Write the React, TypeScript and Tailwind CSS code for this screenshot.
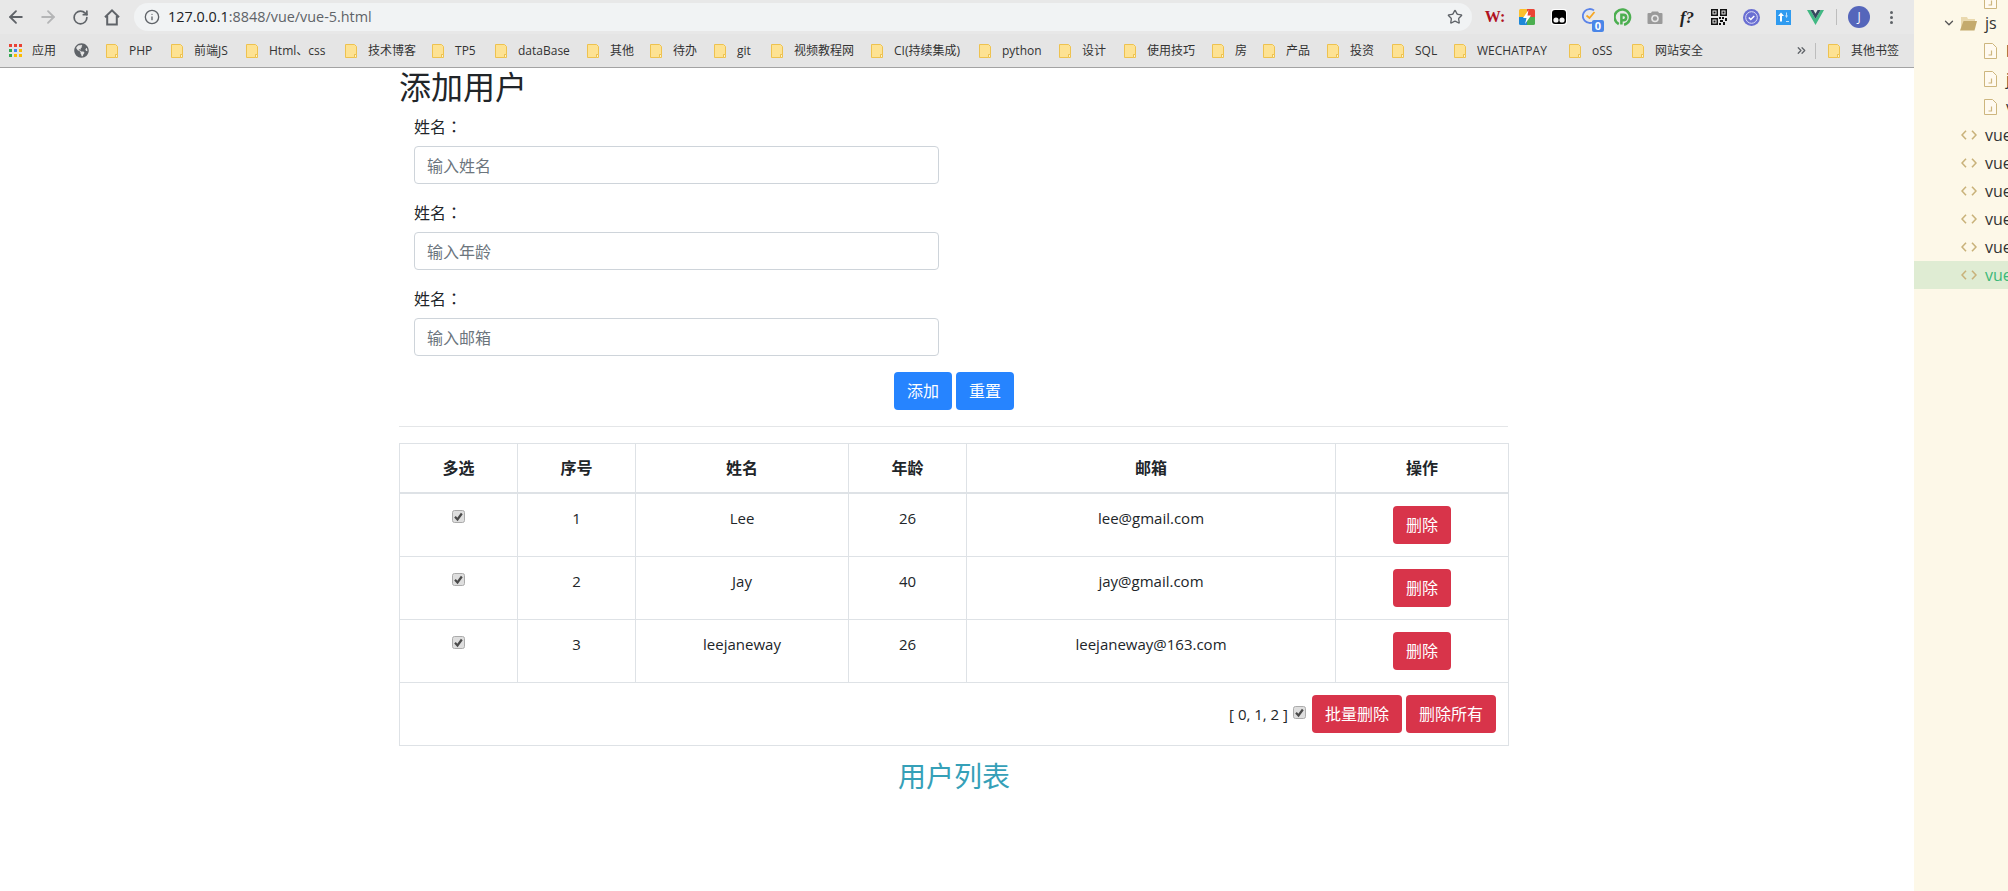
import { ArrowLeft, ArrowRight, ChevronDown, ChevronsRight, Info, RotateCw, Star } from 'lucide-react';
import { FaGlobeAmericas } from 'react-icons/fa';

const bookmarks = [
  { name: 'PHP', w: 'w-[65px]' },
  { name: '前端JS', w: 'w-[75px]' },
  { name: 'Html、css', w: 'w-[99px]' },
  { name: '技术博客', w: 'w-[87px]' },
  { name: 'TP5', w: 'w-[63px]' },
  { name: 'dataBase', w: 'w-[92px]' },
  { name: '其他', w: 'w-[63px]' },
  { name: '待办', w: 'w-[64px]' },
  { name: 'git', w: 'w-[57px]' },
  { name: '视频教程网', w: 'w-[100px]' },
  { name: 'CI(持续集成)', w: 'w-[108px]' },
  { name: 'python', w: 'w-[80px]' },
  { name: '设计', w: 'w-[65px]' },
  { name: '使用技巧', w: 'w-[88px]' },
  { name: '房', w: 'w-[51px]' },
  { name: '产品', w: 'w-[64px]' },
  { name: '投资', w: 'w-[65px]' },
  { name: 'SQL', w: 'w-[62px]' },
  { name: 'WECHATPAY', w: 'w-[115px]' },
  { name: 'oSS', w: 'w-[63px]' },
  { name: '网站安全', w: 'w-[72px]' },
];

const users = [
  { id: 1, name: 'Lee', age: 26, email: 'lee@gmail.com' },
  { id: 2, name: 'Jay', age: 40, email: 'jay@gmail.com' },
  { id: 3, name: 'leejaneway', age: 26, email: 'leejaneway@163.com' },
];

function FolderMark() {
  return (
    <svg width="12" height="14" viewBox="0 0 12 14" className="shrink-0">
      <path d="M.5.5h9l2 2v8h-2v3h-9z" fill="#fde293" stroke="#eec24f" />
      <path d="M9.5 13.5v-3h2v3z" fill="#fff3c8" stroke="#eec24f" />
    </svg>
  );
}

function AppsGrid() {
  const colors = ['#e94235', '#e94235', '#e94235', '#34a853', '#4285f4', '#fbbc05', '#34a853', '#fbbc05', '#fbbc05'];
  return (
    <div className="grid grid-cols-3 gap-[2px] w-[13px] shrink-0">
      {colors.map((c, i) => (
        <svg key={i} width="3" height="3" viewBox="0 0 3 3"><rect width="3" height="3" fill={c} /></svg>
      ))}
    </div>
  );
}

function HomeIcon() {
  return (
    <svg width="18" height="18" viewBox="0 0 18 18" fill="none" stroke="#5f6368" strokeWidth="2">
      <path d="M2 9.2 9 2.4l7 6.8M4.2 8v8.4h9.6V8" />
    </svg>
  );
}

function ZapIcon() {
  return (
    <svg width="16" height="16" viewBox="0 0 16 16">
      <path d="M1.5 0H8v8H0V1.5A1.5 1.5 0 0 1 1.5 0z" fill="#fbc02d" />
      <path d="M8 0h6.5A1.5 1.5 0 0 1 16 1.500V8H8z" fill="#ea4335" />
      <path d="M0 8h8v8H1.500A1.500 1.500 0 0 1 0 14.500z" fill="#1e88d8" />
      <path d="M8 8h8v6.500a1.500 1.500 0 0 1-1.500 1.500H8z" fill="#4caf50" />
      <path d="M9.500 1 4 9h3.500L6 15l6-8.500H8.500z" fill="#fff" />
    </svg>
  );
}

function MonkeyIcon() {
  return (
    <svg width="16" height="16" viewBox="0 0 16 16">
      <rect width="16" height="16" rx="3" fill="#fff" />
      <rect x="1" y="1" width="14" height="14" rx="3" fill="#000" />
      <circle cx="5" cy="11" r="2.600" fill="#f4f4f4" />
      <circle cx="11" cy="11" r="2.600" fill="#f4f4f4" />
    </svg>
  );
}

function TaskBadgeIcon() {
  return (
    <div className="relative w-[16px] h-[16px] -translate-x-[1px] -translate-y-[1px]">
      <svg width="16" height="16" viewBox="0 0 16 16" fill="none" strokeWidth="1.800">
        <path d="M12 2.400A7 7 0 1 0 12 13.600" stroke="#5c84e8" />
        <path d="m4.500 7.500 3 2.500 5-6" stroke="#f6a623" />
      </svg>
      <span className="absolute left-[10px] top-[12px] w-[12px] h-[12px] rounded-[2px] bg-[#4a86e8] text-white text-[11px] leading-[12px] text-center font-bold">0</span>
    </div>
  );
}

function GreenPIcon() {
  return (
    <svg width="18" height="18" viewBox="0 0 17 17" fill="none" stroke="#4caf50">
      <path d="M4.500 15.200A7.300 7.300 0 1 1 9.500 15.800" strokeWidth="2.400" />
      <path d="M7 15.500V6.500h2a2.500 2.500 0 0 1 0 5H7" strokeWidth="2.400" />
    </svg>
  );
}

function CameraIcon() {
  return (
    <svg width="16" height="15" viewBox="0 0 16 15">
      <path d="M5 1.500h6l1 1.500h2.500a1 1 0 0 1 1 1v9a1 1 0 0 1-1 1h-13a1 1 0 0 1-1-1V4a1 1 0 0 1 1-1H4z" fill="#9a9a9a" />
      <circle cx="8" cy="8.500" r="3.800" fill="#e7e7e7" />
      <circle cx="8" cy="8.500" r="2.200" fill="#9a9a9a" />
    </svg>
  );
}

function QrIcon() {
  return (
    <svg width="16" height="16" viewBox="0 0 16 16" fill="#111">
      <path fillRule="evenodd" d="M0 0h7v7H0zM1.500 1.500v4h4v-4zM9 0h7v7H9zM10.500 1.500v4h4v-4zM0 9h7v7H0zM1.500 10.500v4h4v-4z" />
      <path d="M2.500 2.500h2v2h-2zM11.500 2.500h2v2h-2zM2.500 11.500h2v2h-2zM8 8h2v2H8zM11 8h2v2h-2zM14 9h2v3h-2zM9 11h3v2H9zM8 14h2v2H8zM12 13h2v3h-2z" />
    </svg>
  );
}

function SealIcon() {
  return (
    <svg width="17" height="17" viewBox="0 0 17 17" fill="none">
      <circle cx="8.500" cy="8.500" r="8.500" fill="#6a6fd2" />
      <circle cx="8.500" cy="8.500" r="5.800" stroke="#dfe0f7" strokeWidth="1" />
      <path d="m5.800 8.500 2 2 3.500-3.600" stroke="#fff" strokeWidth="1.500" />
    </svg>
  );
}

function BlueExtIcon() {
  return (
    <svg width="15" height="15" viewBox="0 0 15 15">
      <rect width="15" height="15" fill="#2f9bf0" />
      <path d="M5 2.500 2 6h2v5.500h2V6h2z" fill="#fff" />
      <path d="M10 2.500h1v3h1L10.500 8 9 5.500h1zM10 11h3v1h-3z" fill="#bfe0fb" />
    </svg>
  );
}

function VueIcon() {
  return (
    <svg width="17" height="15" viewBox="0 0 17 15">
      <path d="M0 0h3.400l5.100 8.800L13.600 0H17L8.500 15z" fill="#41b883" />
      <path d="M3.400 0h3l2.100 3.700L10.600 0h3L8.500 8.800z" fill="#34495e" />
    </svg>
  );
}

function ExtSlot({ children }: { children: React.ReactNode }) {
  return <div className="w-[32px] h-[32px] flex items-center justify-center shrink-0">{children}</div>;
}

function FileMark() {
  return (
    <svg width="13" height="16" viewBox="0 0 13 16" fill="none" stroke="#cdb67e" className="shrink-0">
      <path d="M.5.500h8l4 4v11H.5z" fill="#fffaf0" />
      <path d="M7.500 7.500v4.500h-3" strokeWidth="1.200" />
    </svg>
  );
}

function CodeMark() {
  return (
    <svg width="16" height="10" viewBox="0 0 16 10" fill="none" stroke="#c9b27a" strokeWidth="1.600" className="shrink-0">
      <path d="M5 .8 1 5l4 4.200M11 .8 15 5l-4 4.200" />
    </svg>
  );
}

function TickBox({ className = '' }: { className?: string }) {
  return (
    <svg width="13" height="13" viewBox="0 0 13 13" className={`inline-block shrink-0 ${className}`}>
      <rect x=".5" y=".5" width="12" height="12" rx="2" fill="#dedede" stroke="#ababab" />
      <path d="m3 6.800 2.500 2.700L9.800 3.500" fill="none" stroke="#4a4a4a" strokeWidth="2.200" />
    </svg>
  );
}

export default function App() {
  return (
    <div className="flex h-[891px] w-[2008px] overflow-hidden bg-white text-[#212529] font-['Open_Sans','Noto_Sans_CJK_SC',sans-serif]">
      <div className="w-[1914px] shrink-0">
        {/* browser toolbar */}
        <div className="h-[34px] flex items-center bg-[#e8e8e8]">
          <ExtSlot><ArrowLeft size={20} color="#5f6368" strokeWidth={2.200} /></ExtSlot>
          <ExtSlot><ArrowRight size={20} color="#b4b5b6" strokeWidth={2.200} /></ExtSlot>
          <ExtSlot><RotateCw size={17} color="#5f6368" strokeWidth={2.400} /></ExtSlot>
          <ExtSlot><HomeIcon /></ExtSlot>
          <div className="ml-[6px] w-[1338px] h-[28px] rounded-full bg-[#f1f3f4] flex items-center pl-[10px] pr-[9px] shrink-0">
            <Info size={16} color="#5f6368" strokeWidth={2} />
            <span className="ml-[8px] text-[14.4px] text-[#5f6368]"><span className="text-[#202124]">127.0.0.1</span>:8848/vue/vue-5.html</span>
            <Star size={16} color="#5f6368" strokeWidth={2} className="ml-auto" />
          </div>
          <div className="ml-[7px] flex items-center">
            <ExtSlot><span className="font-['Liberation_Serif',serif] font-bold text-[16px] leading-none text-[#b0121f]">W:</span></ExtSlot>
            <ExtSlot><ZapIcon /></ExtSlot>
            <ExtSlot><MonkeyIcon /></ExtSlot>
            <ExtSlot><TaskBadgeIcon /></ExtSlot>
            <ExtSlot><GreenPIcon /></ExtSlot>
            <ExtSlot><CameraIcon /></ExtSlot>
            <ExtSlot><span className="font-['Liberation_Serif',serif] italic font-bold text-[17px] leading-none text-[#222]">f?</span></ExtSlot>
            <ExtSlot><QrIcon /></ExtSlot>
            <ExtSlot><SealIcon /></ExtSlot>
            <ExtSlot><BlueExtIcon /></ExtSlot>
            <ExtSlot><VueIcon /></ExtSlot>
            <div className="ml-[5px] mr-[11px] w-px h-[16px] bg-[#bdbdbd]" />
            <div className="w-[22px] h-[22px] rounded-full bg-[#5566bb] text-white text-[12px] flex items-center justify-center">J</div>
            <div className="ml-[20px] flex flex-col gap-[2px]">
              <span className="w-[3px] h-[3px] rounded-full bg-[#5f6368]" />
              <span className="w-[3px] h-[3px] rounded-full bg-[#5f6368]" />
              <span className="w-[3px] h-[3px] rounded-full bg-[#5f6368]" />
            </div>
          </div>
        </div>

        {/* bookmarks bar */}
        <div className="h-[34px] flex items-center bg-[#e5e5e5] border-b border-[#a3a3a3] pl-[9px] text-[12px] text-[#333]">
          <AppsGrid />
          <span className="ml-[10px]">应用</span>
          <FaGlobeAmericas size={15} color="#5f6368" className="ml-[18px] shrink-0" />
          <div className="ml-[17px] flex items-center">
            {bookmarks.map((b) => (
              <div key={b.name} className={`${b.w} shrink-0 flex items-center gap-[11px] whitespace-nowrap`}>
                <FolderMark />
                <span>{b.name}</span>
              </div>
            ))}
          </div>
          <ChevronsRight size={13} color="#5f6368" strokeWidth={2.400} className="ml-auto" />
          <div className="ml-[7px] w-px h-[16px] bg-[#bdbdbd]" />
          <div className="ml-[12px] mr-[15px] flex items-center gap-[11px]">
            <FolderMark />
            <span>其他书签</span>
          </div>
        </div>

        {/* page */}
        <div className="ml-[399px] w-[1110px]">
          <h2 className="text-[32px] leading-[1.2] mb-[8px]">添加用户</h2>
          <form className="pl-[15px]">
            {['输入姓名', '输入年龄', '输入邮箱'].map((p) => (
              <div key={p} className="mb-[16px]">
                <label className="block h-[24px] text-[16px] leading-[24px] mb-[8px]">姓名<span className="font-['Noto_Sans_CJK_TC',sans-serif]">：</span></label>
                <input placeholder={p} className="block w-[525px] h-[38px] pl-[12px] pr-[12px] pt-[2px] border border-[#ced4da] rounded-[4px] text-[16px] placeholder:text-[#6c757d]" />
              </div>
            ))}
          </form>
          <div className="flex justify-center gap-[4px]">
            <button className="w-[58px] h-[38px] rounded-[4px] bg-[#2684ff] text-white text-[16px]">添加</button>
            <button className="w-[58px] h-[38px] rounded-[4px] bg-[#2684ff] text-white text-[16px]">重置</button>
          </div>
          <hr className="my-[16px] w-[1109px] border-[#e4e6e8]" />
          <table className="w-[1109px] table-fixed border-collapse text-[16px] leading-[24px] text-center">
            <colgroup>
              <col className="w-[118px]" />
              <col className="w-[118px]" />
              <col className="w-[213px]" />
              <col className="w-[118px]" />
              <col className="w-[369px]" />
              <col className="w-[173px]" />
            </colgroup>
            <thead>
              <tr>
                {['多选', '序号', '姓名', '年龄', '邮箱', '操作'].map((h) => (
                  <th key={h} className="p-[12px] border border-[#dee2e6] border-b-2 font-bold">{h}</th>
                ))}
              </tr>
            </thead>
            <tbody>
              {users.map((u) => (
                <tr key={u.id}>
                  <td className="p-[12px] border border-[#dee2e6] align-top"><TickBox className="align-[1px]" /></td>
                  <td className="p-[12px] border border-[#dee2e6] align-top text-[15px]">{u.id}</td>
                  <td className="p-[12px] border border-[#dee2e6] align-top text-[15px]">{u.name}</td>
                  <td className="p-[12px] border border-[#dee2e6] align-top text-[15px]">{u.age}</td>
                  <td className="p-[12px] border border-[#dee2e6] align-top text-[15px]">{u.email}</td>
                  <td className="p-[12px] border border-[#dee2e6] align-top">
                    <button className="w-[58px] h-[38px] rounded-[4px] bg-[#d8344a] text-white">删除</button>
                  </td>
                </tr>
              ))}
              <tr>
                <td colSpan={6} className="p-[12px] border border-[#dee2e6]">
                  <div className="flex items-center justify-end">
                    <span className="text-[15px]">[ 0, 1, 2 ]</span>
                    <TickBox className="ml-[5px] mr-[6px] -translate-y-[2px]" />
                    <button className="w-[90px] h-[38px] rounded-[4px] bg-[#d8344a] text-white">批量删除</button>
                    <button className="ml-[4px] w-[90px] h-[38px] rounded-[4px] bg-[#d8344a] text-white">删除所有</button>
                  </div>
                </td>
              </tr>
            </tbody>
          </table>
          <h3 className="mt-[14px] text-[28px] leading-[1.2] text-center text-[#35a0b8]">用户列表</h3>
        </div>
      </div>

      {/* editor file tree */}
      <div className="w-[94px] shrink-0 bg-[#fdf8e8] text-[16px] text-[#333] overflow-hidden">
        <div className="h-[9px] overflow-hidden flex items-end pl-[70px]">
          <FileMark />
        </div>
        <div className="h-[28px] flex items-center pl-[28px] whitespace-nowrap">
          <ChevronDown size={14} color="#555" strokeWidth={2.200} className="shrink-0" />
          <svg width="17" height="15" viewBox="0 0 17 15" className="ml-[4px] shrink-0">
            <path d="M1 1h6l1 2h7v2H4L1 14z" fill="#ead9ae" />
            <path d="M3.500 5H17l-2.500 9.500H0z" fill="#c4aa6d" />
          </svg>
          <span className="ml-[8px]">js</span>
        </div>
        {['bootstrap.js', 'jquery.js', 'vue.js'].map((f) => (
          <div key={f} className="h-[28px] flex items-center pl-[70px] whitespace-nowrap">
            <FileMark />
            <span className="ml-[9px]">{f}</span>
          </div>
        ))}
        {[0, 1, 2, 3, 4, 5].map((i) => (
          <div key={i} className={`h-[28px] flex items-center pl-[47px] whitespace-nowrap ${i === 5 ? 'bg-[#dfecd3] text-[#3cb878]' : ''}`}>
            <CodeMark />
            <span className="ml-[8px]">vue-{i}.html</span>
          </div>
        ))}
      </div>
    </div>
  );
}
